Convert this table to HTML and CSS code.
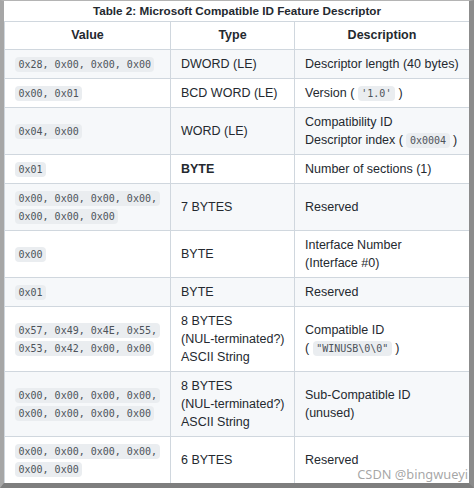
FILE: index.html
```html
<!DOCTYPE html>
<html>
<head>
<meta charset="utf-8">
<link rel="stylesheet" href="styles.css">
</head>
<body>
<div class="frame">
  <table class="desc">
    <caption>Table 2: Microsoft Compatible ID Feature Descriptor</caption>
    <colgroup><col class="c1"><col class="c2"><col class="c3"></colgroup>
    <thead>
      <tr><th>Value</th><th>Type</th><th>Description</th></tr>
    </thead>
    <tbody>
      <tr><td><code>0x28, 0x00, 0x00, 0x00</code></td><td>DWORD (LE)</td><td>Descriptor length (40 bytes)</td></tr>
      <tr><td><code>0x00, 0x01</code></td><td>BCD WORD (LE)</td><td>Version ( <code>'1.0'</code> )</td></tr>
      <tr><td><code>0x04, 0x00</code></td><td>WORD (LE)</td><td>Compatibility ID<br>Descriptor index ( <code>0x0004</code> )</td></tr>
      <tr><td><code>0x01</code></td><td><strong>BYTE</strong></td><td>Number of sections (1)</td></tr>
      <tr><td><code>0x00, 0x00, 0x00, 0x00, 0x00, 0x00, 0x00</code></td><td>7 BYTES</td><td>Reserved</td></tr>
      <tr><td><code>0x00</code></td><td>BYTE</td><td>Interface Number<br>(Interface #0)</td></tr>
      <tr><td><code>0x01</code></td><td>BYTE</td><td>Reserved</td></tr>
      <tr><td><code>0x57, 0x49, 0x4E, 0x55, 0x53, 0x42, 0x00, 0x00</code></td><td>8 BYTES<br>(NUL-terminated?)<br>ASCII String</td><td>Compatible ID<br>( <code>"WINUSB\0\0"</code> )</td></tr>
      <tr><td><code>0x00, 0x00, 0x00, 0x00, 0x00, 0x00, 0x00, 0x00</code></td><td>8 BYTES<br>(NUL-terminated?)<br>ASCII String</td><td>Sub-Compatible ID<br>(unused)</td></tr>
      <tr><td><code>0x00, 0x00, 0x00, 0x00, 0x00, 0x00</code></td><td>6 BYTES</td><td>Reserved</td></tr>
    </tbody>
  </table>
  <div class="watermark">CSDN @bingwueyi</div>
</div>
</body>
</html>
```

FILE: styles.css
```css
html, body {
  margin: 0;
  padding: 0;
  background: #ffffff;
}

.frame {
  position: relative;
  box-sizing: border-box;
  width: 474px;
  height: 488px;
  overflow: hidden;
  border-top: 1px solid #b4b4b4;
  border-left: 4px solid #a6a6a6;
  border-right: 5px solid #8c8c8c;
  border-bottom: 5px solid #7e7e7e;
  background: #ffffff;
}

.desc {
  width: 465px;
  border-collapse: collapse;
  table-layout: fixed;
  font-family: "Liberation Sans", Arial, sans-serif;
  font-size: 12.5px;
  line-height: 18px;
  color: #24292f;
}

.desc caption {
  font-weight: bold;
  font-size: 11.7px;
  line-height: 20px;
  height: 20px;
  text-align: center;
  color: #24292f;
}

.c1 { width: 166px; }
.c2 { width: 124px; }
.c3 { width: 175px; }

.desc th,
.desc td {
  border: 1px solid #d0d7de;
  padding: 5px 10px;
  vertical-align: middle;
}

.desc th {
  font-weight: bold;
  text-align: center;
  line-height: 17px;
}

.desc td {
  text-align: left;
}

.desc td:nth-child(2) {
  white-space: nowrap;
  padding-right: 4px;
}

.desc tbody tr:nth-child(odd) {
  background: #f6f8fa;
}

.desc strong {
  font-weight: bold;
}

.desc code {
  font-family: "DejaVu Sans Mono", "Liberation Mono", monospace;
  font-size: 10px;
  line-height: 1;
  color: #4d535a;
  background: #eaedf0;
  border-radius: 4px;
  padding: 2px 3.5px;
  -webkit-box-decoration-break: clone;
  box-decoration-break: clone;
}

.watermark {
  position: absolute;
  right: 1px;
  bottom: 0;
  font-family: "Noto Sans", "Liberation Sans", sans-serif;
  font-size: 12.8px;
  line-height: 17px;
  color: rgba(150, 150, 150, 0.85);
  white-space: nowrap;
}
```
